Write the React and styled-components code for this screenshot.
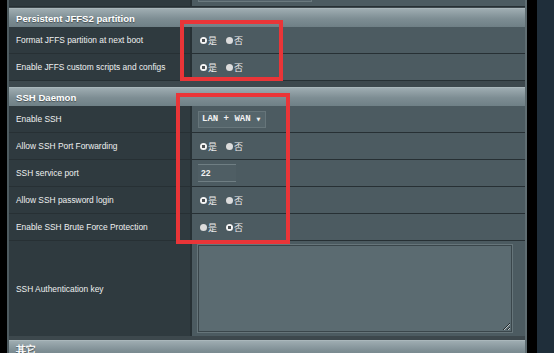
import React from 'react';
import styled, { createGlobalStyle } from 'styled-components';

const GlobalStyle = createGlobalStyle`
  html, body { margin: 0; padding: 0; background: #000; }
  body { font-family: "Liberation Sans", Arial, sans-serif; }
`;

const Page = styled.div`
  position: relative;
  display: flex;
  height: 353px;
  overflow: hidden;
  background: #000;
`;

const Gutter = styled.div`
  width: ${p => p.$w}px;
  flex-shrink: 0;
  background: ${p => p.$bg || '#000'};
`;

const Main = styled.div`
  width: 516px;
  flex-shrink: 0;
  border-left: 2px solid #4e5b60;
  border-right: 2px solid #5f6d72;
  background: #3d484d;
  display: flex;
  flex-direction: column;
`;

const Side = styled.div`
  flex: 1;
  background: #1f2e3a;
`;

const Section = styled.div`
  display: flex;
  flex-direction: column;
  margin-top: ${p => p.$top || 0}px;
`;

const Header = styled.div`
  height: 19px;
  margin-top: ${p => p.$top || 0}px;
  display: flex;
  align-items: center;
  padding-left: 7px;
  background: linear-gradient(#9eacb1, #7d8d93 55%, #6f8086);
  border-top: 1px solid #aab7bb;
  box-sizing: border-box;
  color: #fff;
  font-size: 9.6px;
  font-weight: bold;
  text-shadow: 0 1px 1px rgba(0, 0, 0, 0.45);
`;

const Row = styled.div`
  display: grid;
  grid-template-columns: 181px 1fr;
  height: ${p => p.$h || 26}px;
  margin-top: ${p => p.$top || 0}px;
  border-bottom: 1px solid #273034;
`;

const Label = styled.div`
  display: flex;
  align-items: center;
  padding-left: 7px;
  background: #2f3a3f;
  color: #eef0f0;
  font-size: 8.4px;
`;

const Value = styled.div`
  display: flex;
  align-items: ${p => (p.$top ? 'flex-start' : 'center')};
  padding: ${p => (p.$top ? '4px 6px' : '0 6px')};
  border-left: 2px solid #273135;
  background: #4c5b61;
`;

const Options = styled.div`
  display: flex;
  align-items: center;
  gap: 9px;
  padding-left: 2px;
`;

const Option = styled.label`
  display: flex;
  align-items: center;
  gap: 1px;
  color: #ececec;
  font-family: "Noto Sans CJK SC", sans-serif;
  font-size: 9px;
  line-height: 1;
`;

const Dot = styled.span`
  width: 7px;
  height: 7px;
  border-radius: 50%;
  background: ${p =>
    p.$on
      ? 'radial-gradient(circle, #4a4f52 0 1.5px, #f4f4f4 2px)'
      : '#dcdcdc'};
`;

const Select = styled.div`
  width: 68px;
  height: 17px;
  box-sizing: border-box;
  display: flex;
  align-items: center;
  gap: 6px;
  padding-left: 3px;
  background: #55656b;
  border: 1px solid #66757a;
  color: #f2f2f2;
  font-family: "Liberation Mono", monospace;
  font-weight: bold;
  font-size: 9px;
  white-space: pre;
`;

const Arrow = styled.span`
  font-size: 5px;
  font-family: "DejaVu Sans", sans-serif;
`;

const PortInput = styled.div`
  width: 38px;
  height: 18px;
  box-sizing: border-box;
  display: flex;
  align-items: center;
  padding-left: 3px;
  background: #4f5e64;
  border-top: 1px solid #6f7e83;
  border-bottom: 1px solid #6f7e83;
  color: #f2f2f2;
  font-weight: bold;
  font-size: 8.5px;
`;

const OldInput = styled.div`
  width: 114px;
  height: 17px;
  box-sizing: border-box;
  background: #53626a;
  border: 1px solid #6a797e;
`;

const KeyArea = styled.textarea`
  width: 314px;
  height: 87px;
  box-sizing: border-box;
  margin: 0;
  background: #5b6b71;
  border: 1px solid #3a464b;
  outline: 1px solid #66757a;
  resize: both;
`;

const Mark = styled.div`
  position: absolute;
  left: ${p => p.$x}px;
  top: ${p => p.$y}px;
  width: ${p => p.$w}px;
  height: ${p => p.$h}px;
  box-sizing: border-box;
  border: 4px solid #ea3538;
`;

function YesNo({ yes = true }) {
  return (
    <Options>
      <Option><Dot $on={yes} />是</Option>
      <Option><Dot $on={!yes} />否</Option>
    </Options>
  );
}

export default function App() {
  return (
    <Page>
      <GlobalStyle />
      <Gutter $w={7} />
      <Main>
        <Section>
          <Row $top={-20}>
            <Label />
            <Value><OldInput /></Value>
          </Row>
          <Header $top={1}>Persistent JFFS2 partition</Header>
          <Row>
            <Label>Format JFFS partition at next boot</Label>
            <Value><YesNo /></Value>
          </Row>
          <Row>
            <Label>Enable JFFS custom scripts and configs</Label>
            <Value><YesNo /></Value>
          </Row>
        </Section>

        <Section $top={6}>
          <Header>SSH Daemon</Header>
          <Row>
            <Label>Enable SSH</Label>
            <Value>
              <Select>LAN + WAN<Arrow>▼</Arrow></Select>
            </Value>
          </Row>
          <Row>
            <Label>Allow SSH Port Forwarding</Label>
            <Value><YesNo /></Value>
          </Row>
          <Row>
            <Label>SSH service port</Label>
            <Value><PortInput>22</PortInput></Value>
          </Row>
          <Row>
            <Label>Allow SSH password login</Label>
            <Value><YesNo /></Value>
          </Row>
          <Row>
            <Label>Enable SSH Brute Force Protection</Label>
            <Value><YesNo yes={false} /></Value>
          </Row>
          <Row $h={93}>
            <Label>SSH Authentication key</Label>
            <Value $top><KeyArea readOnly defaultValue="" /></Value>
          </Row>
        </Section>

        <Section $top={5}>
          <Header>其它</Header>
        </Section>
      </Main>
      <Gutter $w={10} />
      <Side />

      <Mark $x={180} $y={20} $w={103} $h={61} />
      <Mark $x={176} $y={93} $w={114} $h={151} />
    </Page>
  );
}
